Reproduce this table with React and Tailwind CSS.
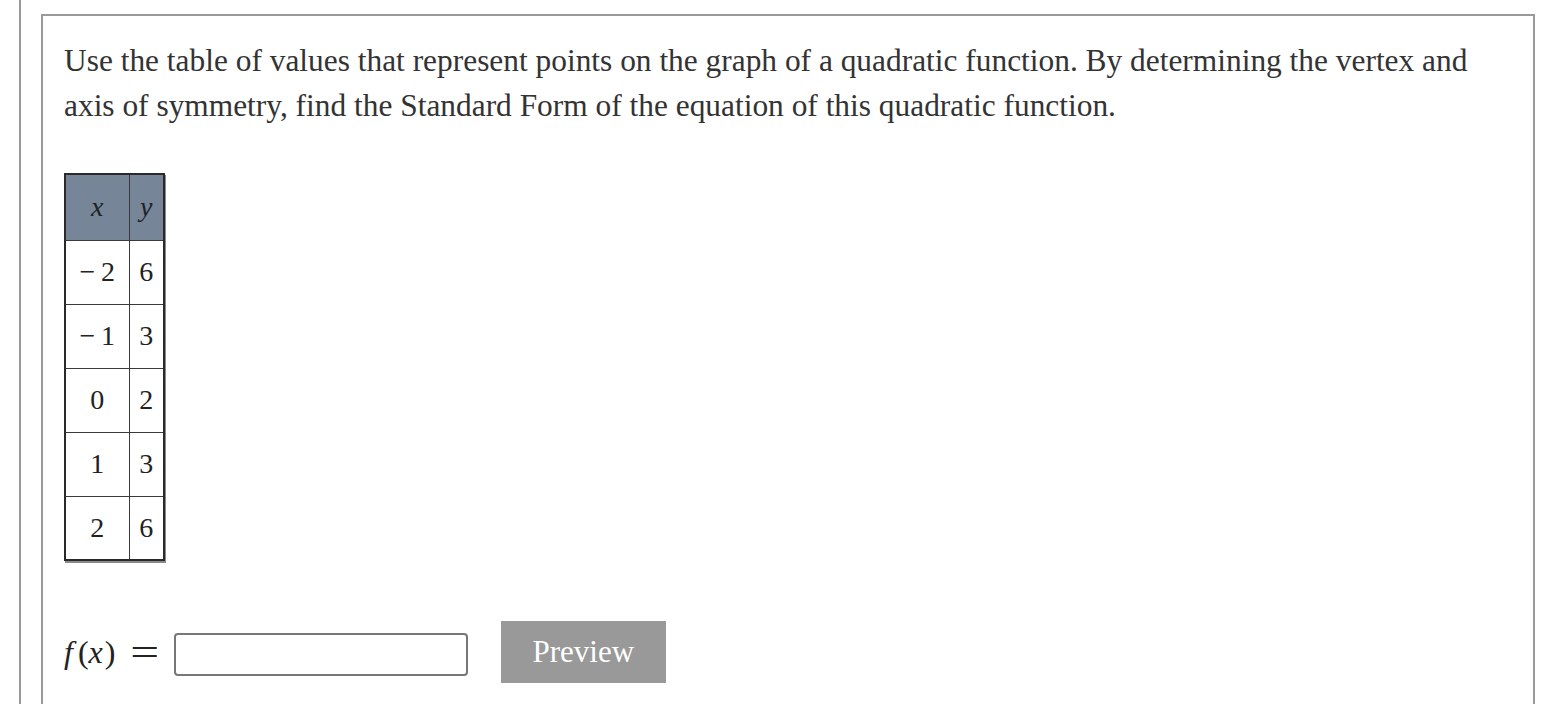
import { useState } from "react";

const rows = [
  ["\u2212\u20092", "6"],
  ["\u2212\u20091", "3"],
  ["0", "2"],
  ["1", "3"],
  ["2", "6"],
];

function ValueTable() {
  return (
    <table className="border-collapse border-2 border-[#2a2a2a] shadow-[1px_2px_0_#8a8a8a] text-[28px] text-[#222]">
      <thead>
        <tr className="bg-[#778599] h-[66px]">
          <th className="w-[64px] border border-[#3a3a3a] font-normal italic">x</th>
          <th className="w-[35px] border border-[#3a3a3a] font-normal italic">y</th>
        </tr>
      </thead>
      <tbody>
        {rows.map(([x, y], i) => (
          <tr key={i} className="h-[64px]">
            <td className="border border-[#3a3a3a] text-center whitespace-nowrap">{x}</td>
            <td className="border border-[#3a3a3a] text-center">{y}</td>
          </tr>
        ))}
      </tbody>
    </table>
  );
}

export default function App() {
  const [answer, setAnswer] = useState("");

  return (
    <div
      className="h-[704px] overflow-hidden bg-white"
      style={{ fontFamily: '"Liberation Serif", "Times New Roman", serif' }}
    >
      <div className="ml-[19px] h-full border-l-2 border-[#999] pl-[20px] pt-[14px]">
        <div className="w-[1494px] h-full border-2 border-b-0 border-[#999] pl-[21px] pr-[21px] pt-[22px] text-[#222]">
          <p className="text-[31.4px] leading-[45px] text-[#333]">
            Use the table of values that represent points on the graph of a quadratic function. By
            determining the vertex and axis of symmetry, find the Standard Form of the equation of
            this quadratic function.
          </p>

          <div className="mt-[45px]">
            <ValueTable />
          </div>

          <div className="mt-[60px] flex items-center">
            <span className="text-[32px] text-[#222] whitespace-nowrap">
              <i>f</i>
              <span className="ml-[5px]">(</span>
              <i>x</i>
              <span className="ml-[2px]">)</span>
            </span>
            <span className="ml-[19px] inline-block scale-x-[1.35] text-[38px] leading-none text-[#222]">
              =
            </span>
            <input
              type="text"
              value={answer}
              onChange={(e) => setAnswer(e.target.value)}
              className="ml-[18px] mt-[5px] w-[294px] h-[43px] border-2 border-[#777] rounded-[4px] px-2 text-[22px] focus:outline-none"
            />
            <button
              type="button"
              className="ml-[33px] w-[165px] h-[62px] bg-[#999] text-white text-[31px]"
            >
              Preview
            </button>
          </div>
        </div>
      </div>
    </div>
  );
}
